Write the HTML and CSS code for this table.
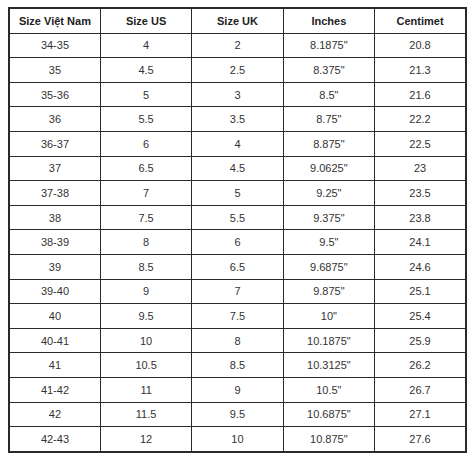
FILE: index.html
```html
<!DOCTYPE html>
<html lang="vi">
<head>
<meta charset="utf-8">
<title>Bảng size giày</title>
<link rel="stylesheet" href="styles.css">
</head>
<body>
<table class="size-table">
  <thead>
    <tr><th>Size Việt Nam</th><th>Size US</th><th>Size UK</th><th>Inches</th><th>Centimet</th></tr>
  </thead>
  <tbody>
    <tr><td>34-35</td><td>4</td><td>2</td><td>8.1875"</td><td>20.8</td></tr>
    <tr><td>35</td><td>4.5</td><td>2.5</td><td>8.375"</td><td>21.3</td></tr>
    <tr><td>35-36</td><td>5</td><td>3</td><td>8.5"</td><td>21.6</td></tr>
    <tr><td>36</td><td>5.5</td><td>3.5</td><td>8.75"</td><td>22.2</td></tr>
    <tr><td>36-37</td><td>6</td><td>4</td><td>8.875"</td><td>22.5</td></tr>
    <tr><td>37</td><td>6.5</td><td>4.5</td><td>9.0625"</td><td>23</td></tr>
    <tr><td>37-38</td><td>7</td><td>5</td><td>9.25"</td><td>23.5</td></tr>
    <tr><td>38</td><td>7.5</td><td>5.5</td><td>9.375"</td><td>23.8</td></tr>
    <tr><td>38-39</td><td>8</td><td>6</td><td>9.5"</td><td>24.1</td></tr>
    <tr><td>39</td><td>8.5</td><td>6.5</td><td>9.6875"</td><td>24.6</td></tr>
    <tr><td>39-40</td><td>9</td><td>7</td><td>9.875"</td><td>25.1</td></tr>
    <tr><td>40</td><td>9.5</td><td>7.5</td><td>10"</td><td>25.4</td></tr>
    <tr><td>40-41</td><td>10</td><td>8</td><td>10.1875"</td><td>25.9</td></tr>
    <tr><td>41</td><td>10.5</td><td>8.5</td><td>10.3125"</td><td>26.2</td></tr>
    <tr><td>41-42</td><td>11</td><td>9</td><td>10.5"</td><td>26.7</td></tr>
    <tr><td>42</td><td>11.5</td><td>9.5</td><td>10.6875"</td><td>27.1</td></tr>
    <tr><td>42-43</td><td>12</td><td>10</td><td>10.875"</td><td>27.6</td></tr>
  </tbody>
</table>
</body>
</html>
```
FILE: styles.css
```css
html, body {
  margin: 0;
  padding: 0;
  background: #ffffff;
}

body {
  padding: 7px 0 0 8px;
  font-family: "Liberation Sans", Arial, sans-serif;
  font-size: 11px;
  color: #333333;
}

.size-table {
  border-collapse: collapse;
  width: 459px;
  table-layout: fixed;
  border: 2px solid #2a2a2a;
}

.size-table th,
.size-table td {
  border: 1px solid #2a2a2a;
  height: 23.6px;
  padding: 0;
  text-align: center;
  vertical-align: middle;
}

.size-table th {
  font-weight: bold;
  color: #222222;
}
```
